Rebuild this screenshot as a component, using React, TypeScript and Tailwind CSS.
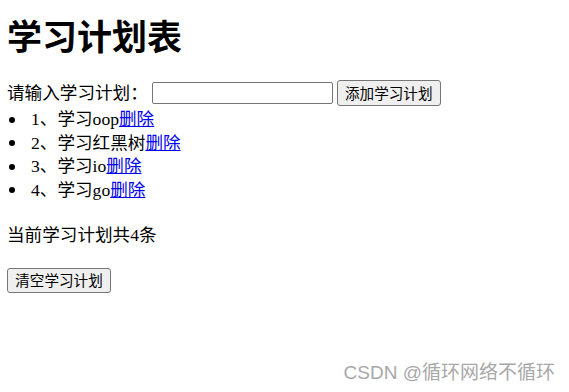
export default function App() {
  const plans = ['学习oop', '学习红黑树', '学习io', '学习go']

  return (
    <div
      className="relative h-[392px] w-[569px] bg-white pl-[7px] text-[17.6px] text-black"
      style={{ fontFamily: '"Liberation Serif", "Noto Sans CJK SC", serif' }}
    >
      <div className="pt-[15px]">
        <h1 className="text-[35px] font-bold leading-[40px]" style={{ fontFamily: '"Noto Sans CJK SC", sans-serif' }}>
          学习计划表
        </h1>

        {/* input row */}
        <div className="mt-[25px] flex h-[26px] items-center">
          <span className="leading-[26px]">请输入学习计划：</span>
          <input
            type="text"
            className="ml-[4px] h-[22px] w-[181px] rounded-[2px] border border-[#767676] bg-white px-1 outline-none"
          />
          <button
            className="ml-[4px] h-[26px] w-[104px] rounded-[3px] border border-[#767676] bg-[#efefef] text-[14.6px] leading-none"
            style={{ fontFamily: '"Noto Sans CJK SC", sans-serif' }}
          >
            添加学习计划
          </button>
        </div>

        {/* plan list */}
        <ul className="mt-[2px]">
          {plans.map((p, i) => (
            <li key={i} className="flex h-[23.5px] items-center leading-[23.5px]">
              <span className="flex w-[24px] items-center pl-[2px]">
                <span className="inline-block h-[6px] w-[6px] rounded-full bg-black" />
              </span>
              <span>
                {i + 1}、{p}
                <a href="#" className="text-[#0000ee] underline">
                  删除
                </a>
              </span>
            </li>
          ))}
        </ul>

        <p className="mt-[21px] h-[24px] leading-[24px]">当前学习计划共{plans.length}条</p>

        <button
          className="mt-[21px] h-[25px] w-[104px] rounded-[3px] border border-[#767676] bg-[#efefef] text-[14.6px] leading-none"
          style={{ fontFamily: '"Noto Sans CJK SC", sans-serif' }}
        >
          清空学习计划
        </button>
      </div>

      {/* watermark */}
      <div
        className="absolute right-[14px] top-[362px] text-[19px] leading-[22px] text-[#a8a8a8]"
        style={{ fontFamily: '"Liberation Sans", "Noto Sans CJK SC", sans-serif' }}
      >
        CSDN @循环网络不循环
      </div>
    </div>
  )
}
